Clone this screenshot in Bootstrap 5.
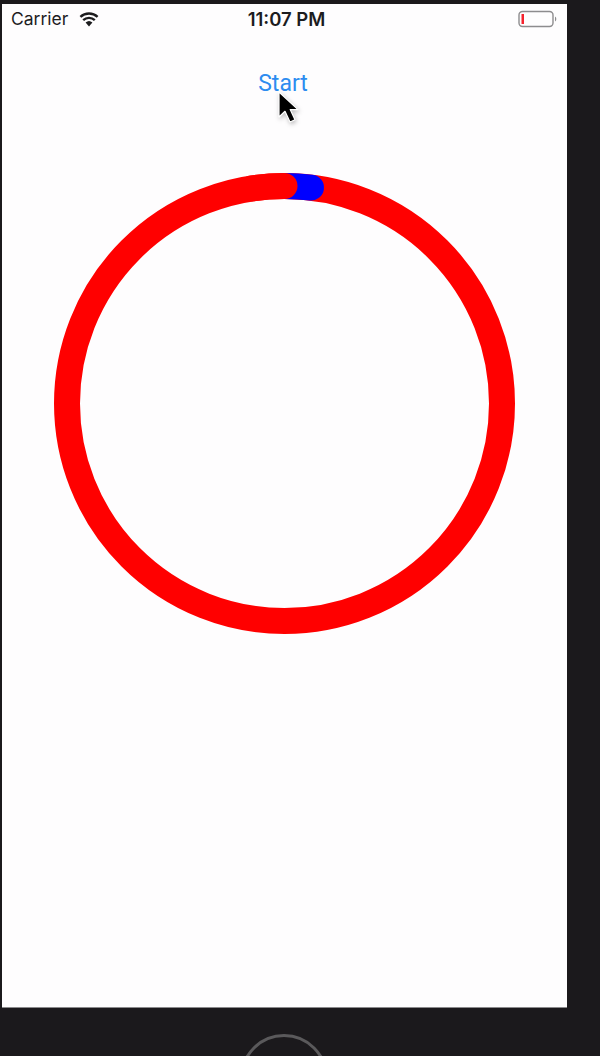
<!DOCTYPE html>
<html lang="en">
<head>
<meta charset="utf-8">
<title>Start</title>
<link href="https://cdn.jsdelivr.net/npm/bootstrap@5.3.0/dist/css/bootstrap.min.css" rel="stylesheet">
<style>
html, body { height: 1056px; overflow: hidden; }
body { background: #1b191c; position: relative; font-family: "Inter", "Liberation Sans", sans-serif; }
.phone-screen { width: 565px; height: 1004px; margin: 4px 0 0 2px; background: #fefdfe; border-bottom: 1px solid #8b8a8c; }
.status-row { height: 30px; padding: 0 10px 0 9px; color: #1c1c1e; font-size: 17.5px; line-height: 30px; }
.status-left { width: 170px; }
.status-right { width: 165px; }
.status-gap { gap: 10px; }
.status-time { font-size: 18.5px; font-weight: 600; color: #1c1c1e; }
.start-btn { color: #2d8cf0; font-family: "Roboto", "Liberation Sans", sans-serif; font-size: 23px; line-height: 26px; padding: 0; margin: 37px 3px 0 0; border: 0; background: none; }
.ring-svg { display: block; margin: 74px 0 0 50px; }
.home-wrap { margin: 26px 0 0 240px; height: 22px; }
.home-svg { display: block; }
.cursor-svg { position: absolute; left: 276px; top: 90px; filter: drop-shadow(1px 2px 2px rgba(0,0,0,.25)); }
</style>
</head>
<body>
<div class="phone-screen d-flex flex-column">
  <div class="status-row d-flex align-items-center justify-content-between">
    <div class="status-left d-flex align-items-center status-gap">
      <span>Carrier</span>
      <svg width="22" height="16" viewBox="0 0 22 16"><path d="M11 15.5 7.6 11.6a5 5 0 0 1 6.8 0z" fill="#1c1c1e"/><path d="M5.2 9.1a8.6 8.6 0 0 1 11.6 0" fill="none" stroke="#1c1c1e" stroke-width="2.4"/><path d="M2.4 5.8a12.8 12.8 0 0 1 17.2 0" fill="none" stroke="#1c1c1e" stroke-width="2.4"/></svg>
    </div>
    <span class="status-time">11:07 PM</span>
    <div class="status-right d-flex justify-content-end">
      <svg width="39" height="18" viewBox="0 0 39 18"><rect x="1" y="1.5" width="34" height="15" rx="3.5" fill="none" stroke="#8d8c8e" stroke-width="1.4"/><rect x="3.5" y="4" width="2.5" height="10" fill="#f5222d"/><path d="M37 6.5a3 3 0 0 1 0 5z" fill="#8d8c8e"/></svg>
    </div>
  </div>
  <div class="text-center"><button type="button" class="start-btn">Start</button></div>
  <svg class="ring-svg" width="465" height="465" viewBox="0 0 465 465">
    <circle cx="232.5" cy="232.5" r="217.5" fill="none" stroke="#ff0000" stroke-width="26"/>
    <path d="M232.5 15A217.5 217.5 0 0 1 259 16.6" fill="none" stroke="#0000ff" stroke-width="26" stroke-linecap="round"/>
    <path d="M200 17.4A217.5 217.5 0 0 1 232.5 15" fill="none" stroke="#ff0000" stroke-width="26" stroke-linecap="round"/>
  </svg>
</div>
<div class="home-wrap">
  <svg class="home-svg" width="88" height="22" viewBox="0 0 88 22"><circle cx="44" cy="44" r="42.5" fill="none" stroke="#5a595b" stroke-width="3"/></svg>
</div>
<svg class="cursor-svg" width="26" height="36" viewBox="0 0 26 36"><path d="M3 2V27L9 21.3 14 32 19 29.8 14.2 19.6H22z" fill="#000" stroke="#fff" stroke-width="1.2" stroke-linejoin="round"/></svg>
<script src="https://cdn.jsdelivr.net/npm/bootstrap@5.3.0/dist/js/bootstrap.bundle.min.js"></script>
</body>
</html>
